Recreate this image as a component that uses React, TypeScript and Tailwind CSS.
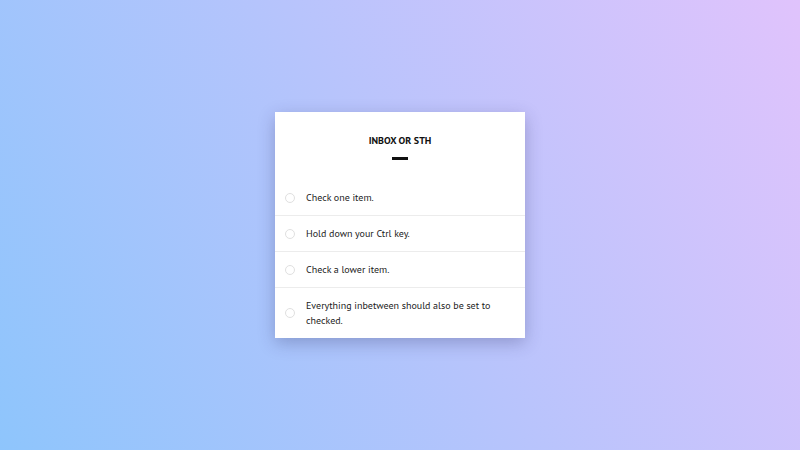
import React from "react";

const items = [
  "Check one item.",
  "Hold down your Ctrl key.",
  "Check a lower item.",
  "Everything inbetween should also be set to checked.",
];

export default function App() {
  return (
    <div
      className="w-[800px] h-[450px] flex items-center justify-center bg-[linear-gradient(62deg,#8EC5FC_0%,#E0C3FC_100%)]"
      style={{ fontFamily: "'PT Sans', Carlito, Lato, sans-serif" }}
    >
      <div className="w-[250px] bg-white shadow-[0_5px_16px_rgba(40,40,90,0.28)]">
        <div className="flex flex-col items-center pt-[21px] pb-[20px]">
          <h1 className="text-[10px] leading-[15px] font-bold text-[#111]">INBOX OR STH</h1>
          <div className="mt-[9px] w-[16px] h-[3px] bg-[#111]" />
        </div>
        <ul>
          {items.map((t, i) => (
            <li
              key={i}
              className={`flex items-center py-[10px] pl-[10px] pr-[20px] ${i < items.length - 1 ? "border-b border-[#ececec]" : ""}`}
            >
              <span className="shrink-0 w-[10px] h-[10px] rounded-full border border-[#e0e0e0]" />
              <span className="ml-[11px] text-[10px] leading-[15px] text-[#222]">{t}</span>
            </li>
          ))}
        </ul>
      </div>
    </div>
  );
}
